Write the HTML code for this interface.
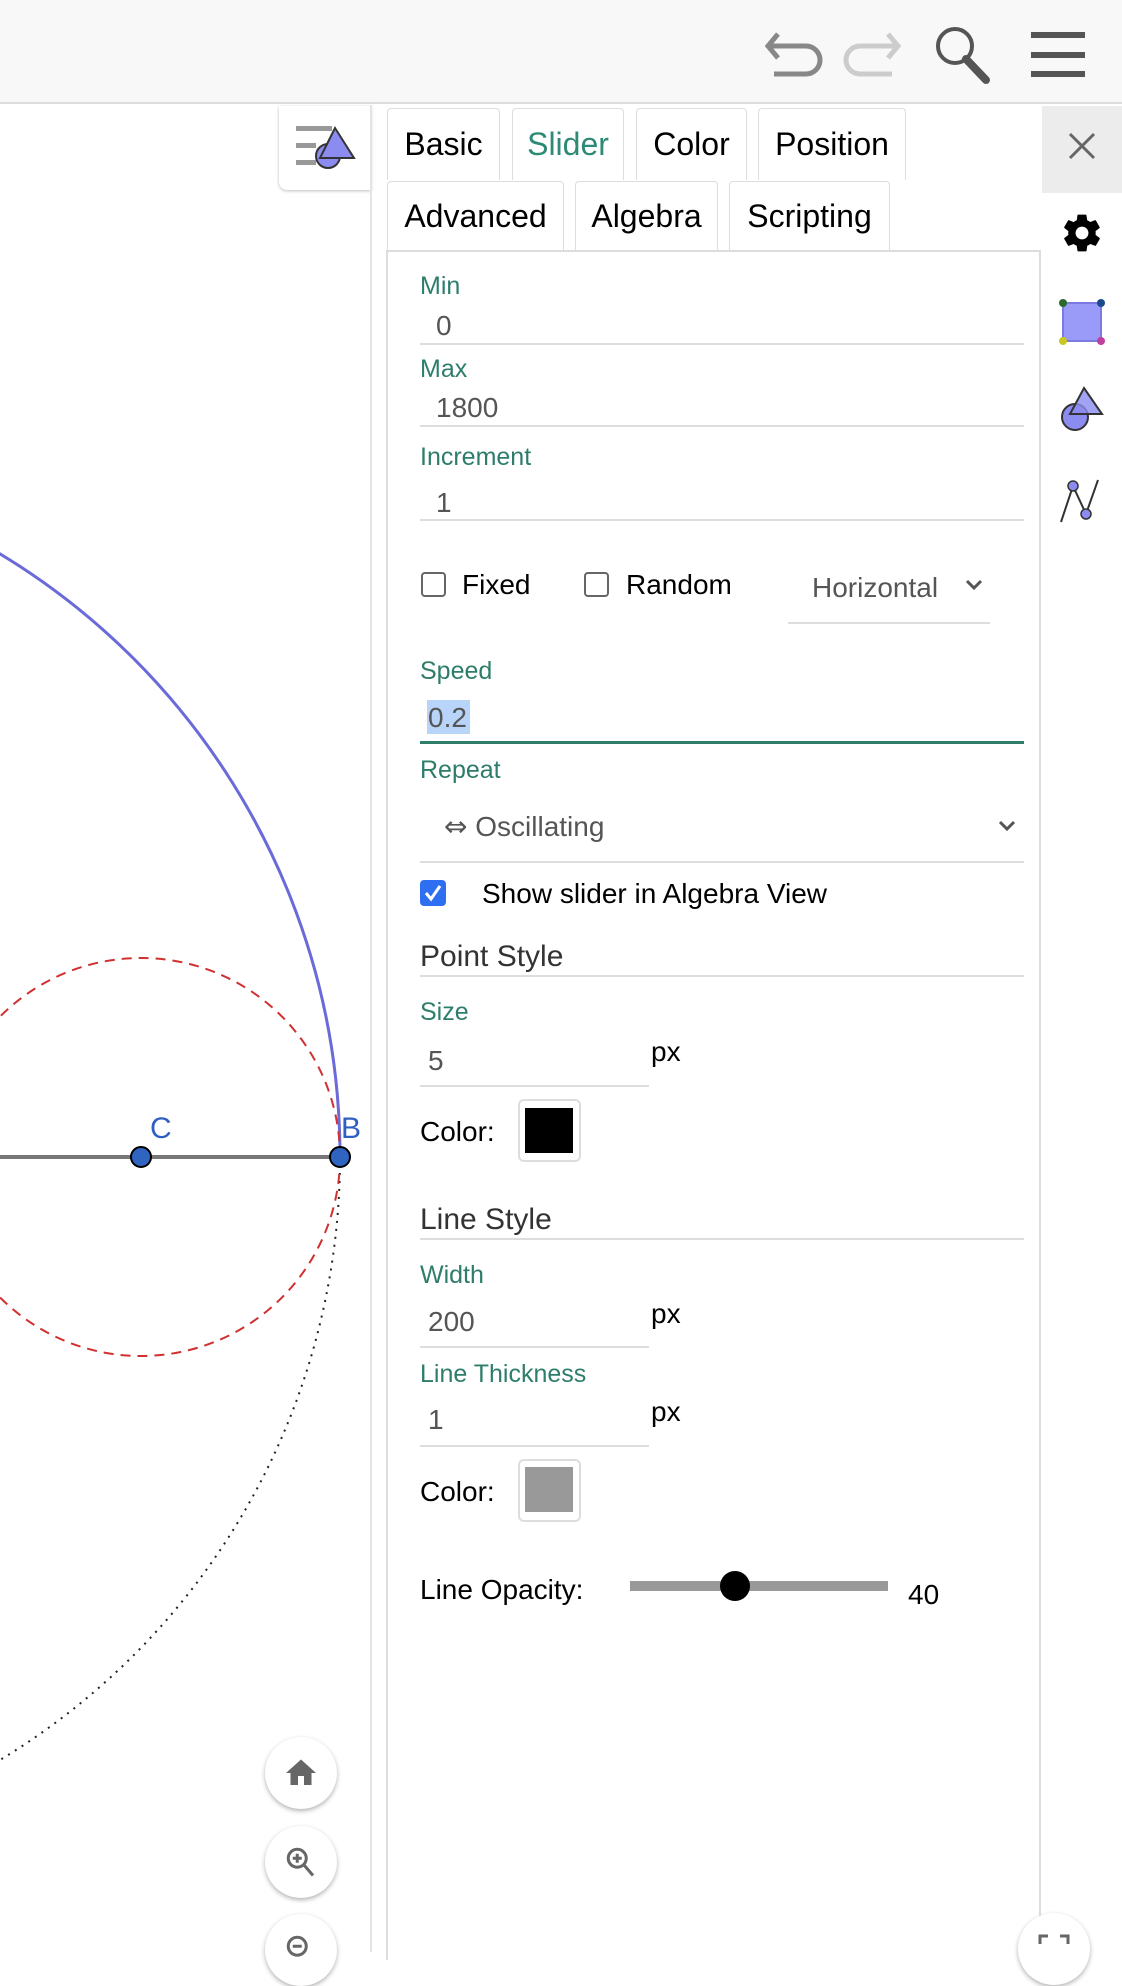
<!DOCTYPE html>
<html><head><meta charset="utf-8"><style>
*{margin:0;padding:0;box-sizing:border-box}
body{width:1122px;height:1952px;overflow:hidden;background:#fff;font-family:"Liberation Sans",Arial,sans-serif;position:relative}
.a{position:absolute}
.tab{position:absolute;border:1px solid #ddd;border-bottom:none;border-radius:4px 4px 0 0;background:#fff;font-size:32px;color:#000;display:flex;align-items:center;justify-content:center}
.lbl{position:absolute;left:420px;font-size:25px;color:#2e7d6b}
.val{position:absolute;font-size:28px;color:#555}
.ul{position:absolute;height:2px;background:#ddd}
.txt{position:absolute;font-size:28px;color:#000}
.hdr{position:absolute;left:420px;font-size:30px;color:#333}
.cb{position:absolute;width:25px;height:25px;border:2px solid #666;border-radius:4px;background:#fff}
.fab{position:absolute;width:72px;height:72px;border-radius:50%;background:#fff;box-shadow:0 2px 5px rgba(0,0,0,.3)}
</style></head><body>
<div class="a" style="left:0;top:0;width:1122px;height:104px;background:#f8f8f8;border-bottom:2px solid #ddd"></div>
<svg class="a" style="left:760px;top:24px" width="340" height="60" viewBox="0 0 340 60">
 <path d="M18 10 L8 22 L18 34 M8 22 H46 a14 14 0 0 1 0 28 H14" fill="none" stroke="#888" stroke-width="5"/>
 <path d="M128 10 L138 22 L128 34 M138 22 H100 a14 14 0 0 0 0 28 H132" fill="none" stroke="#ccc" stroke-width="5"/>
 <circle cx="195" cy="22" r="17" fill="none" stroke="#555" stroke-width="4"/>
 <path d="M206 35 L226 56" stroke="#555" stroke-width="8" stroke-linecap="round"/>
 <rect x="271" y="8" width="54" height="6" fill="#555"/><rect x="271" y="28" width="54" height="6" fill="#555"/><rect x="271" y="47" width="54" height="6" fill="#555"/>
</svg>
<svg class="a" style="left:0;top:105px" width="371" height="1847" viewBox="0 105 371 1847">
 <path d="M-364.7 452 A705 705 0 0 1 340 1157" fill="none" stroke="#6a6ad8" stroke-width="3"/>
 <path d="M340 1157 A705 705 0 0 1 0 1760" fill="none" stroke="#222" stroke-width="2" stroke-dasharray="2 6"/>
 <circle cx="141" cy="1157" r="199" fill="none" stroke="#d03030" stroke-width="2" stroke-dasharray="10 7"/>
 <line x1="0" y1="1157" x2="340" y2="1157" stroke="#777" stroke-width="4"/>
 <circle cx="141" cy="1157" r="10" fill="#2f64c0" stroke="#000" stroke-width="2"/>
 <circle cx="340" cy="1157" r="10" fill="#2f64c0" stroke="#000" stroke-width="2"/>
 <text x="150" y="1138" font-size="30" fill="#2f5fc0" font-family="Liberation Sans">C</text>
 <text x="341" y="1138" font-size="30" fill="#2f5fc0" font-family="Liberation Sans">B</text>
</svg>
<div class="a" style="left:279px;top:106px;width:92px;height:84px;background:#fff;border-radius:0 0 0 8px;box-shadow:0 1px 3px rgba(0,0,0,.25)"></div>
<svg class="a" style="left:294px;top:124px" width="64" height="48" viewBox="0 0 64 48">
 <rect x="2" y="2" width="36" height="5" fill="#999"/><rect x="2" y="19" width="20" height="5" fill="#999"/><rect x="2" y="36" width="20" height="5" fill="#999"/>
 <circle cx="34" cy="32" r="12" fill="#8c8cf0" stroke="#333" stroke-width="2"/>
 <path d="M41 4 L60 34 H26 Z" fill="#8c8cf0" stroke="#333" stroke-width="2"/>
</svg>
<div class="fab" style="left:265px;top:1737px"></div>
<svg class="a" style="left:283px;top:1755px" width="36" height="36" viewBox="0 0 24 24"><path d="M10 20v-6h4v6h5v-8h3L12 3 2 12h3v8z" fill="#666"/></svg>
<div class="fab" style="left:265px;top:1826px"></div>
<svg class="a" style="left:283px;top:1844px" width="36" height="36" viewBox="0 0 24 24"><circle cx="9.5" cy="9.5" r="6" fill="none" stroke="#666" stroke-width="2"/><path d="M14 14l6 7M9.5 6.5v6M6.5 9.5h6" stroke="#666" stroke-width="2"/></svg>
<div class="fab" style="left:265px;top:1914px"></div>
<svg class="a" style="left:283px;top:1932px" width="36" height="36" viewBox="0 0 24 24"><circle cx="9.5" cy="9.5" r="6" fill="none" stroke="#666" stroke-width="2"/><path d="M6.5 9.5h6" stroke="#666" stroke-width="2"/></svg>
<div class="a" style="left:370px;top:105px;width:2px;height:1847px;background:#e4e4e4"></div>
<div class="tab" style="left:387px;top:108px;width:113px;height:72px">Basic</div>
<div class="tab" style="left:512px;top:108px;width:112px;height:72px;color:#2e8a76">Slider</div>
<div class="tab" style="left:636px;top:108px;width:111px;height:72px">Color</div>
<div class="tab" style="left:758px;top:108px;width:148px;height:72px">Position</div>
<div class="tab" style="left:387px;top:181px;width:177px;height:70px">Advanced</div>
<div class="tab" style="left:575px;top:181px;width:143px;height:70px">Algebra</div>
<div class="tab" style="left:729px;top:181px;width:161px;height:70px">Scripting</div>
<div class="a" style="left:386px;top:250px;width:655px;height:1710px;border:2px solid #ddd;border-bottom:none"></div>
<div class="lbl" style="top:272px">Min</div><div class="val" style="left:436px;top:310px">0</div><div class="ul" style="left:420px;top:343px;width:604px"></div>
<div class="lbl" style="top:355px">Max</div><div class="val" style="left:436px;top:392px">1800</div><div class="ul" style="left:420px;top:425px;width:604px"></div>
<div class="lbl" style="top:443px">Increment</div><div class="val" style="left:436px;top:487px">1</div><div class="ul" style="left:420px;top:519px;width:604px"></div>
<div class="cb" style="left:421px;top:572px"></div><div class="txt" style="left:462px;top:569px">Fixed</div>
<div class="cb" style="left:584px;top:572px"></div><div class="txt" style="left:626px;top:569px">Random</div>
<div class="val" style="left:812px;top:572px">Horizontal</div>
<svg class="a" style="left:964px;top:578px" width="20" height="14" viewBox="0 0 20 14"><path d="M3 3l7 7 7-7" fill="none" stroke="#555" stroke-width="3"/></svg>
<div class="ul" style="left:788px;top:622px;width:202px"></div>
<div class="lbl" style="top:657px">Speed</div>
<div class="a" style="left:427px;top:700px;width:43px;height:34px;background:#b8d4f8"></div>
<div class="val" style="left:428px;top:702px">0.2</div>
<div class="a" style="left:420px;top:741px;width:604px;height:3px;background:#2e7d6b"></div>
<div class="lbl" style="top:756px">Repeat</div>
<div class="val" style="left:444px;top:810px"><span style="font-size:28px;font-family:'DejaVu Sans',sans-serif">⇔</span> Oscillating</div>
<svg class="a" style="left:997px;top:819px" width="20" height="14" viewBox="0 0 20 14"><path d="M3 3l7 7 7-7" fill="none" stroke="#555" stroke-width="3"/></svg>
<div class="ul" style="left:420px;top:861px;width:604px"></div>
<div class="a" style="left:420px;top:880px;width:26px;height:26px;background:#2d6ff0;border-radius:4px"></div>
<svg class="a" style="left:420px;top:880px" width="26" height="26" viewBox="0 0 26 26"><path d="M6 13l5 6 9-13" fill="none" stroke="#fff" stroke-width="3"/></svg>
<div class="txt" style="left:482px;top:878px">Show slider in Algebra View</div>
<div class="hdr" style="top:940px">Point Style</div><div class="ul" style="left:420px;top:975px;width:604px"></div>
<div class="lbl" style="top:998px">Size</div><div class="val" style="left:428px;top:1045px">5</div><div class="ul" style="left:420px;top:1085px;width:229px"></div>
<div class="txt" style="left:651px;top:1036px">px</div>
<div class="txt" style="left:420px;top:1116px">Color:</div>
<div class="a" style="left:518px;top:1099px;width:63px;height:63px;border:2px solid #ddd;border-radius:6px;background:#fff"></div>
<div class="a" style="left:525px;top:1108px;width:48px;height:45px;background:#000"></div>
<div class="hdr" style="top:1203px">Line Style</div><div class="ul" style="left:420px;top:1238px;width:604px"></div>
<div class="lbl" style="top:1261px">Width</div><div class="val" style="left:428px;top:1306px">200</div><div class="ul" style="left:420px;top:1346px;width:229px"></div>
<div class="txt" style="left:651px;top:1298px">px</div>
<div class="lbl" style="top:1360px">Line Thickness</div><div class="val" style="left:428px;top:1404px">1</div><div class="ul" style="left:420px;top:1445px;width:229px"></div>
<div class="txt" style="left:651px;top:1396px">px</div>
<div class="txt" style="left:420px;top:1476px">Color:</div>
<div class="a" style="left:518px;top:1459px;width:63px;height:63px;border:2px solid #ddd;border-radius:6px;background:#fff"></div>
<div class="a" style="left:525px;top:1467px;width:48px;height:45px;background:#999"></div>
<div class="txt" style="left:420px;top:1574px">Line Opacity:</div>
<div class="a" style="left:630px;top:1581px;width:258px;height:10px;background:#999"></div>
<div class="a" style="left:720px;top:1571px;width:30px;height:30px;border-radius:50%;background:#000"></div>
<div class="txt" style="left:908px;top:1579px">40</div>
<div class="a" style="left:1042px;top:106px;width:80px;height:87px;background:#ececec"></div>
<svg class="a" style="left:1066px;top:130px" width="32" height="32" viewBox="0 0 32 32"><path d="M4 4L28 28M28 4L4 28" stroke="#666" stroke-width="3"/></svg>
<svg class="a" style="left:1060px;top:211px" width="44" height="44" viewBox="0 0 24 24"><path d="M19.4 13c.04-.3.06-.65.06-1s-.02-.7-.07-1l2.1-1.650c.2-.15.24-.42.12-.64l-2-3.460c-.12-.22-.39-.3-.61-.22l-2.490 1c-.52-.4-1.080-.73-1.690-.98l-.38-2.650A.49.49 0 0 0 14 2h-4c-.25 0-.46.18-.49.42l-.38 2.650c-.61.25-1.170.59-1.690.98l-2.490-1a.5.5 0 0 0-.61.22l-2 3.460c-.13.22-.07.49.12.64L4.570 11c-.05.32-.07.66-.07 1s.02.68.07 1l-2.110 1.650c-.19.15-.24.42-.12.64l2 3.460c.12.22.39.3.61.22l2.490-1c.52.4 1.080.73 1.690.98l.38 2.650c.03.24.24.42.49.42h4c.25 0 .46-.18.49-.42l.38-2.650c.61-.25 1.170-.59 1.690-.98l2.490 1c.23.09.49 0 .61-.22l2-3.460c.12-.22.07-.49-.12-.64zM12 15.500a3.500 3.500 0 1 1 0-7 3.500 3.500 0 0 1 0 7z" fill="#000"/></svg>
<svg class="a" style="left:1056px;top:296px" width="52" height="52" viewBox="0 0 52 52"><rect x="7" y="7" width="38" height="38" fill="#9a9af8" stroke="#7a7ae0" stroke-width="2"/><circle cx="7" cy="7" r="4" fill="#2a6a2a"/><circle cx="45" cy="7" r="4" fill="#1a4a8a"/><circle cx="7" cy="45" r="4" fill="#c8c820"/><circle cx="45" cy="45" r="4" fill="#c040a0"/></svg>
<svg class="a" style="left:1058px;top:384px" width="50" height="50" viewBox="0 0 50 50"><circle cx="17" cy="33" r="13" fill="#8c8cf0" stroke="#333" stroke-width="2"/><path d="M26 4 L44 30 H12 Z" fill="#8c8cf0" fill-opacity=".8" stroke="#333" stroke-width="2"/></svg>
<svg class="a" style="left:1058px;top:476px" width="50" height="50" viewBox="0 0 50 50"><path d="M3 46 L15 10 L28 38 L40 4" fill="none" stroke="#333" stroke-width="2"/><circle cx="15" cy="10" r="5" fill="#8c8cf0" stroke="#333" stroke-width="1.5"/><circle cx="28" cy="38" r="5" fill="#8c8cf0" stroke="#333" stroke-width="1.5"/></svg>
<div class="fab" style="left:1018px;top:1913px"></div>
<svg class="a" style="left:1038px;top:1932px" width="32" height="20" viewBox="0 0 32 20"><path d="M2 12V4h8M30 12V4h-8" fill="none" stroke="#666" stroke-width="3"/></svg>
</body></html>
